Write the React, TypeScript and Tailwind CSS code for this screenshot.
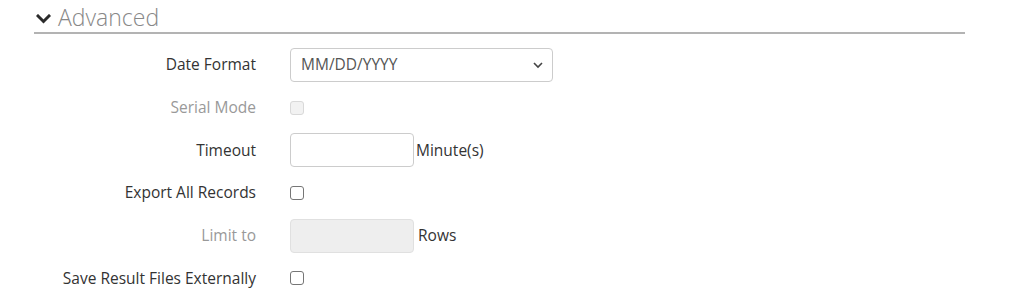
import React from "react";

const font = { fontFamily: '"Open Sans", "Noto Sans", sans-serif' };

function Row({ label, disabled, children }: { label: string; disabled?: boolean; children: React.ReactNode }) {
  return (
    <div className="flex h-[34px] items-center mb-[8.7px]">
      <div className={`w-[222px] text-right text-[15.5px] ${disabled ? "text-[#999]" : "text-[#333]"}`}>{label}</div>
      <div className="ml-[34px] flex items-center">{children}</div>
    </div>
  );
}

function Check({ disabled }: { disabled?: boolean }) {
  return (
    <div
      className={`w-[14px] h-[14px] rounded-[3px] border ${disabled ? "border-[#d9d9d9] bg-[#f2f2f2]" : "border-[#767676] bg-white"}`}
    />
  );
}

export default function App() {
  return (
    <div className="w-[1024px] h-[302px] bg-white overflow-hidden" style={font}>
      <div className="ml-[34px] w-[931px] h-[34px] border-b-2 border-[#b3b3b3] flex items-end">
        <svg width="15" height="10" viewBox="0 0 15 10" className="ml-[2px] mb-[8px]">
          <path d="M2 2 L7.5 7.5 L13 2" fill="none" stroke="#2b2b2b" strokeWidth="3" strokeLinecap="square" />
        </svg>
        <span className="ml-[7px] text-[23px] leading-[30px] font-light text-[#888]">Advanced</span>
      </div>
      <div className="ml-[34px] mt-[14px]">
        <Row label="Date Format">
          <div className="w-[263px] h-[34px] border border-[#ccc] rounded-[4px] flex items-center justify-between pl-[10px] pr-[8px]">
            <span className="text-[15.5px] text-[#555]">MM/DD/YYYY</span>
            <svg width="12" height="8" viewBox="0 0 12 8">
              <path d="M2 2 L6 6 L10 2" fill="none" stroke="#444" strokeWidth="1.6" />
            </svg>
          </div>
        </Row>
        <Row label="Serial Mode" disabled>
          <Check disabled />
        </Row>
        <Row label="Timeout">
          <div className="w-[124px] h-[34px] border border-[#ccc] rounded-[4px] bg-white" />
          <span className="ml-[2px] text-[15.5px] text-[#333]">Minute(s)</span>
        </Row>
        <Row label="Export All Records">
          <Check />
        </Row>
        <Row label="Limit to" disabled>
          <div className="w-[124px] h-[34px] border border-[#e0e0e0] rounded-[4px] bg-[#eee]" />
          <span className="ml-[4px] text-[15.5px] text-[#333]">Rows</span>
        </Row>
        <Row label="Save Result Files Externally">
          <Check />
        </Row>
      </div>
    </div>
  );
}
